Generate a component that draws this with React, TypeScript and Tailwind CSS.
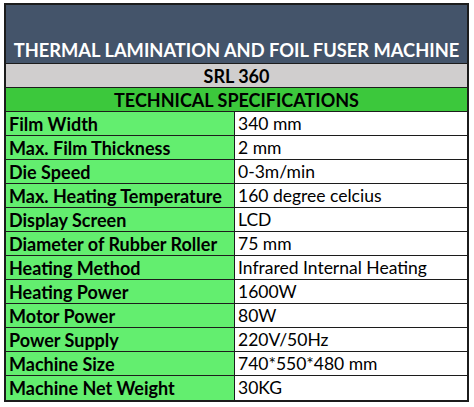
import React from "react";

const rows: [string, string][] = [
  ["Film Width", "340 mm"],
  ["Max. Film Thickness", "2 mm"],
  ["Die Speed", "0-3m/min"],
  ["Max. Heating Temperature", "160 degree celcius"],
  ["Display Screen", "LCD"],
  ["Diameter of Rubber Roller", "75 mm"],
  ["Heating Method", "Infrared Internal Heating"],
  ["Heating Power", "1600W"],
  ["Motor Power", "80W"],
  ["Power Supply", "220V/50Hz"],
  ["Machine Size", "740*550*480 mm"],
  ["Machine Net Weight", "30KG"],
];

export default function App() {
  return (
    <div className="w-[474px] h-[407px] bg-white pt-[3px] pl-[4px]" style={{ fontFamily: "Lato, 'Noto Sans', sans-serif" }}>
      <div className="w-[465px] border-2 border-[#1c1c1c] flex flex-col">
        <div className="h-[59px] bg-[#44546a] border-b border-[#1c1c1c] flex items-end justify-center pb-0">
          <span className="text-white font-bold text-[18.3px] leading-[26px] whitespace-nowrap">THERMAL LAMINATION AND FOIL FUSER MACHINE</span>
        </div>
        <div className="h-[24px] bg-[#d0cece] border-b border-[#1c1c1c] flex items-center justify-center">
          <span className="text-black font-bold text-[18px] leading-[22px]">SRL 360</span>
        </div>
        <div className="h-[24px] bg-[#3cc83c] border-b border-[#1c1c1c] flex items-center justify-center">
          <span className="text-black font-bold text-[18px] leading-[22px]">TECHNICAL SPECIFICATIONS</span>
        </div>
        {rows.map(([k, v], i) => (
          <div key={k} className={`h-[24px] flex ${i < rows.length - 1 ? "border-b border-[#1c1c1c]" : ""}`}>
            <div className="w-[229px] bg-[#63ee6f] border-r border-[#1c1c1c] pl-[3px] flex items-center">
              <span className="text-black font-bold text-[18px] leading-[22px] whitespace-nowrap">{k}</span>
            </div>
            <div className="flex-1 bg-white pl-[3px] flex items-center">
              <span className="text-black text-[17.5px] leading-[22px] whitespace-nowrap">{v}</span>
            </div>
          </div>
        ))}
      </div>
    </div>
  );
}
